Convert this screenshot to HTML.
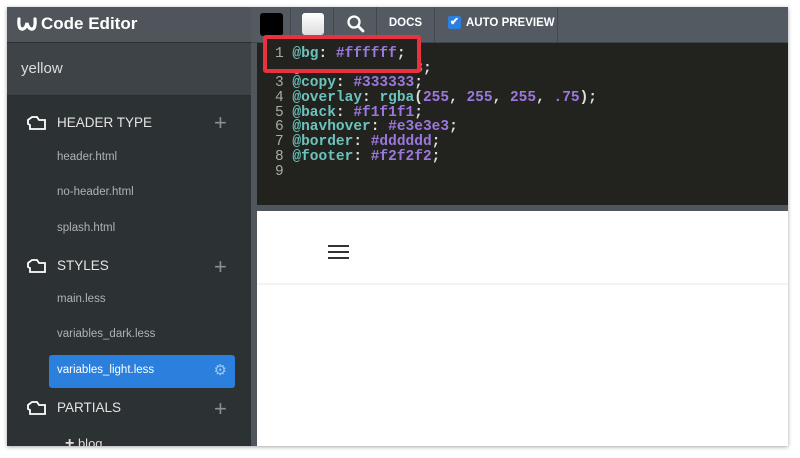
<!DOCTYPE html>
<html><head><meta charset="utf-8"><style>
body{margin:0;width:800px;height:458px;background:#fff;position:relative;overflow:hidden;font-family:"Liberation Sans",sans-serif}
.win{position:absolute;left:7px;top:7px;width:781px;height:439px;overflow:hidden;box-shadow:0 1px 4px rgba(0,0,0,.35);background:#fff}
.sb{position:absolute;left:0;top:0;width:244px;height:439px;background:#2c3134}
.sbh{position:absolute;left:0;top:0;width:244px;height:35px;background:#4f555b;border-bottom:1px solid #2a2e31;color:#fff;font-weight:bold;font-size:16px;line-height:33px}
.proj{position:absolute;left:0;top:36px;width:244px;height:52px;background:#3d4347;border-bottom:1px solid #2a2e31;color:#ddd;font-size:15px;line-height:52px;text-indent:14px}
.sec{position:absolute;left:20px;color:#e4e4e4;font-size:13.5px}
.sec svg{position:absolute;left:0;top:1px}
.sec span{position:absolute;left:30px;top:0;white-space:nowrap}
.plus{position:absolute;left:207px;color:#8a9094;font-size:22px;font-weight:300}
.f{position:absolute;left:50px;color:#aeb2b5;font-size:11.5px}
.sel{position:absolute;left:42px;top:348px;width:186px;height:33px;background:#2b80dd;border-radius:3px;color:#fff;font-size:11.5px;line-height:31px;text-indent:8px}
.split{position:absolute;left:244px;top:35px;width:6px;height:404px;background:#50575c}
.tb{position:absolute;left:244px;top:0;width:537px;height:35px;background:#535a61;border-bottom:1px solid #3e4449}
.tbi{position:absolute;top:0;height:35px;border-right:1px solid #42484d}
.code{font-family:"Liberation Mono",monospace;font-size:14.5px;font-weight:bold;line-height:14.7px;color:#e0e0e0}
.ed{position:absolute;left:250px;top:36px;width:531px;height:162px;background:#22231f;padding-top:4px;box-sizing:border-box;overflow:hidden}
.ed div{padding-left:18px;white-space:pre;height:14.7px}
.k{color:#6cc3bc}.v{color:#9b77de}.n{color:#aaa;font-weight:normal}
.gb{position:absolute;left:250px;top:198px;width:531px;height:6px;background:#50575c}
.pv{position:absolute;left:250px;top:204px;width:531px;height:235px;background:#fff}
</style></head><body>
<div class="win">
<div class="sb">
 <div class="sbh"><svg style="position:absolute;left:10px;top:9px" width="20" height="16" viewBox="0 0 20 16"><path d="M2 3 Q1 14 6 13 Q9 12 10 7 Q11 12 14 13 Q19 14 18 3" fill="none" stroke="#fff" stroke-width="3.2" stroke-linecap="round"/></svg><span style="position:absolute;left:34px;font-size:17px">Code Editor</span></div>
 <div class="proj">yellow</div>
 <div class="sec" style="top:108px"><svg width="20" height="14" viewBox="0 0 20 14"><path d="M1 4 L5 1 H10 L12 4 H18 V13 H3 V9 L1 8 Z" fill="none" stroke="#fff" stroke-width="1.8"/></svg><span>HEADER TYPE</span></div>
 <div class="plus" style="top:103px">+</div>
 <div class="f" style="top:144px">header.html</div>
 <div class="f" style="top:179px">no-header.html</div>
 <div class="f" style="top:215px">splash.html</div>
 <div class="sec" style="top:251px"><svg width="20" height="14" viewBox="0 0 20 14"><path d="M1 4 L5 1 H10 L12 4 H18 V13 H3 V9 L1 8 Z" fill="none" stroke="#fff" stroke-width="1.8"/></svg><span>STYLES</span></div>
 <div class="plus" style="top:247px">+</div>
 <div class="f" style="top:286px">main.less</div>
 <div class="f" style="top:321px">variables_dark.less</div>
 <div class="sel">variables_light.less<span style="position:absolute;right:8px;top:0;color:#9cc7f2;font-size:15px;text-indent:0">⚙</span></div>
 <div class="sec" style="top:393px"><svg width="20" height="14" viewBox="0 0 20 14"><path d="M1 4 L5 1 H10 L12 4 H18 V13 H3 V9 L1 8 Z" fill="none" stroke="#fff" stroke-width="1.8"/></svg><span>PARTIALS</span></div>
 <div class="plus" style="top:389px">+</div>
 <div class="f" style="top:428px;left:58px;color:#ddd;font-size:13px"><b style="font-size:16px">+</b> blog</div>
</div>
<div class="split"></div>
<div class="tb">
 <div class="tbi" style="left:0;width:39px"><div style="position:absolute;left:9px;top:6px;width:23px;height:23px;background:#000;border-radius:3px"></div></div>
 <div class="tbi" style="left:40px;width:42px"><div style="position:absolute;left:11px;top:6px;width:22px;height:22px;background:linear-gradient(#fff,#ddd);border-radius:3px"></div></div>
 <div class="tbi" style="left:83px;width:42px"><svg style="position:absolute;left:13px;top:8px" width="18" height="18" viewBox="0 0 18 18"><circle cx="7" cy="7" r="5.5" fill="none" stroke="#fff" stroke-width="2.3"/><path d="M11 11 L16 16" stroke="#fff" stroke-width="2.8" stroke-linecap="round"/></svg></div>
 <div class="tbi" style="left:126px;width:57px;color:#fff;font-size:11.5px;font-weight:bold;line-height:33px;text-align:center">DOCS</div>
 <div class="tbi" style="left:184px;width:122px;color:#fff;font-size:11.5px;font-weight:bold;line-height:33px"><span style="position:absolute;left:13px;top:9px;width:13px;height:13px;background:#2b7fe0;border-radius:2px;color:#fff;font-size:11px;line-height:13px;text-align:center">✔</span><span style="position:absolute;left:31px">AUTO PREVIEW</span></div>
</div>
<div class="ed code"><div><span class="n">1</span> <span class="k">@bg</span>: <span class="v">#ffffff</span>;</div><div><span class="n">2</span> <span class="k">@title</span>: <span class="v">#333333</span>;</div><div><span class="n">3</span> <span class="k">@copy</span>: <span class="v">#333333</span>;</div><div><span class="n">4</span> <span class="k">@overlay</span>: <span class="k">rgba</span>(<span class="v">255</span>, <span class="v">255</span>, <span class="v">255</span>, <span class="v">.75</span>);</div><div><span class="n">5</span> <span class="k">@back</span>: <span class="v">#f1f1f1</span>;</div><div><span class="n">6</span> <span class="k">@navhover</span>: <span class="v">#e3e3e3</span>;</div><div><span class="n">7</span> <span class="k">@border</span>: <span class="v">#dddddd</span>;</div><div><span class="n">8</span> <span class="k">@footer</span>: <span class="v">#f2f2f2</span>;</div><div><span class="n">9</span></div></div>
<div style="position:absolute;left:256px;top:28px;width:158px;height:38px;border:4px solid #e8323f;border-radius:3px;box-sizing:border-box"></div>
<div class="code" style="position:absolute;left:260px;top:32px;width:150px;height:30px;background:#22231f;padding-top:8px;padding-left:8px;box-sizing:border-box;overflow:hidden;white-space:pre"><span class="n">1</span> <span class="k">@bg</span>: <span class="v">#ffffff</span>;</div>
<div class="gb"></div>
<div class="pv">
 <div style="position:absolute;left:71px;top:34px;width:21px;height:2px;background:#333;box-shadow:0 6px 0 #333,0 12px 0 #333"></div>
 <div style="position:absolute;left:0;top:72px;width:531px;height:2px;background:#f3f3f3"></div>
</div>
</div>
</body></html>
